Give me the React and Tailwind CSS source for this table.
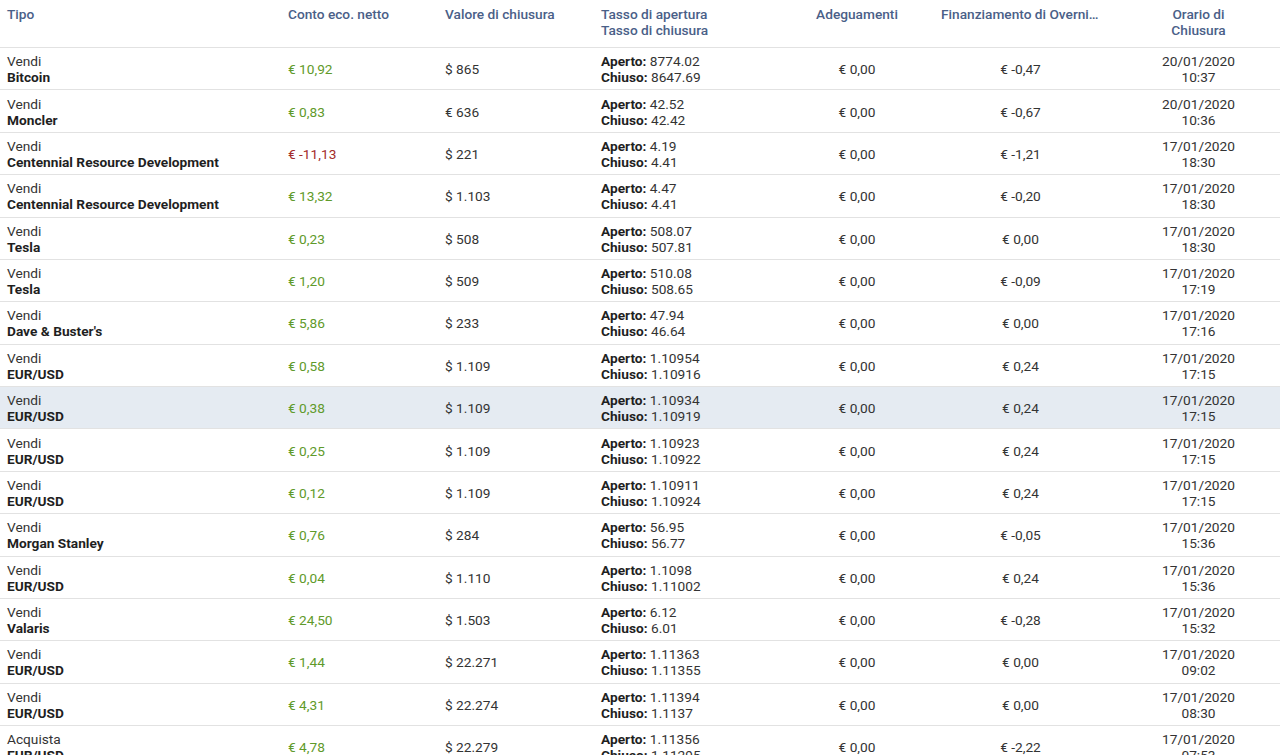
import React from "react";

const rows = [
  ["Vendi", "Bitcoin", "€ 10,92", true, "$ 865", "8774.02", "8647.69", "€ 0,00", "€ -0,47", "20/01/2020", "10:37"],
  ["Vendi", "Moncler", "€ 0,83", true, "€ 636", "42.52", "42.42", "€ 0,00", "€ -0,67", "20/01/2020", "10:36"],
  ["Vendi", "Centennial Resource Development", "€ -11,13", false, "$ 221", "4.19", "4.41", "€ 0,00", "€ -1,21", "17/01/2020", "18:30"],
  ["Vendi", "Centennial Resource Development", "€ 13,32", true, "$ 1.103", "4.47", "4.41", "€ 0,00", "€ -0,20", "17/01/2020", "18:30"],
  ["Vendi", "Tesla", "€ 0,23", true, "$ 508", "508.07", "507.81", "€ 0,00", "€ 0,00", "17/01/2020", "18:30"],
  ["Vendi", "Tesla", "€ 1,20", true, "$ 509", "510.08", "508.65", "€ 0,00", "€ -0,09", "17/01/2020", "17:19"],
  ["Vendi", "Dave & Buster's", "€ 5,86", true, "$ 233", "47.94", "46.64", "€ 0,00", "€ 0,00", "17/01/2020", "17:16"],
  ["Vendi", "EUR/USD", "€ 0,58", true, "$ 1.109", "1.10954", "1.10916", "€ 0,00", "€ 0,24", "17/01/2020", "17:15"],
  ["Vendi", "EUR/USD", "€ 0,38", true, "$ 1.109", "1.10934", "1.10919", "€ 0,00", "€ 0,24", "17/01/2020", "17:15", true],
  ["Vendi", "EUR/USD", "€ 0,25", true, "$ 1.109", "1.10923", "1.10922", "€ 0,00", "€ 0,24", "17/01/2020", "17:15"],
  ["Vendi", "EUR/USD", "€ 0,12", true, "$ 1.109", "1.10911", "1.10924", "€ 0,00", "€ 0,24", "17/01/2020", "17:15"],
  ["Vendi", "Morgan Stanley", "€ 0,76", true, "$ 284", "56.95", "56.77", "€ 0,00", "€ -0,05", "17/01/2020", "15:36"],
  ["Vendi", "EUR/USD", "€ 0,04", true, "$ 1.110", "1.1098", "1.11002", "€ 0,00", "€ 0,24", "17/01/2020", "15:36"],
  ["Vendi", "Valaris", "€ 24,50", true, "$ 1.503", "6.12", "6.01", "€ 0,00", "€ -0,28", "17/01/2020", "15:32"],
  ["Vendi", "EUR/USD", "€ 1,44", true, "$ 22.271", "1.11363", "1.11355", "€ 0,00", "€ 0,00", "17/01/2020", "09:02"],
  ["Vendi", "EUR/USD", "€ 4,31", true, "$ 22.274", "1.11394", "1.1137", "€ 0,00", "€ 0,00", "17/01/2020", "08:30"],
  ["Acquista", "EUR/USD", "€ 4,78", true, "$ 22.279", "1.11356", "1.11295", "€ 0,00", "€ -2,22", "17/01/2020", "07:53"],
];

const cols = "grid grid-cols-[281px_157px_156px_186px_154px_173px_1fr]";

export default function App() {
  return (
    <div
      className="w-[1280px] h-[755px] overflow-hidden bg-white text-[13.7px] leading-4 text-[#333]"
      style={{ fontFamily: "Roboto, 'Liberation Sans', sans-serif" }}
    >
      <div className={`${cols} h-[48px] border-b border-[#e2e2e2] pt-[6px] font-medium text-[#4a6088]`}>
        <div className="pl-[7px]">Tipo</div>
        <div className="pl-[7px]">Conto eco. netto</div>
        <div className="pl-[7px]">Valore di chiusura</div>
        <div className="pl-[7px]">
          <div>Tasso di apertura</div>
          <div>Tasso di chiusura</div>
        </div>
        <div className="text-center">Adeguamenti</div>
        <div className="px-[7px] text-center whitespace-nowrap overflow-hidden text-ellipsis">
          Finanziamento di Overnight
        </div>
        <div className="text-center pl-[10px]">
          <div>Orario di</div>
          <div>Chiusura</div>
        </div>
      </div>
      {rows.map((r, i) => (
        <div
          key={i}
          className={`${cols} h-[42.375px] items-center border-b border-[#e2e2e2] pt-[1px] ${r[11] ? "bg-[#e5ebf2]" : "bg-white"}`}
        >
          <div className="pl-[7px]">
            <div>{r[0]}</div>
            <div className="font-bold text-[#1f1f1f]">{r[1]}</div>
          </div>
          <div className={`pl-[7px] ${r[3] ? "text-[#5f9a2a]" : "text-[#a32b2b]"}`}>{r[2]}</div>
          <div className="pl-[7px]">{r[4]}</div>
          <div className="pl-[7px]">
            <div>
              <span className="font-bold text-[#1f1f1f]">Aperto:</span> {r[5]}
            </div>
            <div>
              <span className="font-bold text-[#1f1f1f]">Chiuso:</span> {r[6]}
            </div>
          </div>
          <div className="text-center">{r[7]}</div>
          <div className="text-center">{r[8]}</div>
          <div className="text-center pl-[10px]">
            <div>{r[9]}</div>
            <div>{r[10]}</div>
          </div>
        </div>
      ))}
    </div>
  );
}
